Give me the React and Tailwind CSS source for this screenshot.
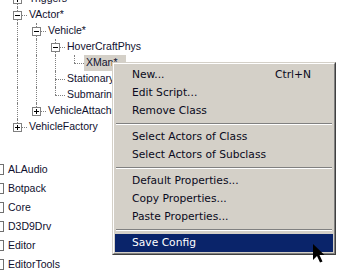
import React from 'react';

const tree = [
  { label: 'Triggers', guides: [], last: false, box: '+', topLine: true },
  { label: 'VActor*', guides: [], last: false, box: '-' },
  { label: 'Vehicle*', guides: [true], last: false, box: '-' },
  { label: 'HoverCraftPhys', guides: [true, true], last: false, box: '-' },
  { label: 'XMan*', guides: [true, true, true], last: true, selected: true },
  { label: 'StationaryTurret', guides: [true, true], last: false },
  { label: 'Submarine', guides: [true, true], last: true },
  { label: 'VehicleAttachment', guides: [true], last: true, box: '+' },
  { label: 'VehicleFactory', guides: [], last: true, box: '+' },
];

const packages = ['ALAudio', 'Botpack', 'Core', 'D3D9Drv', 'Editor', 'EditorTools'];

const menu = [
  { label: 'New...', key: 'Ctrl+N' },
  { label: 'Edit Script...' },
  { label: 'Remove Class' },
  { sep: true },
  { label: 'Select Actors of Class' },
  { label: 'Select Actors of Subclass' },
  { sep: true },
  { label: 'Default Properties...' },
  { label: 'Copy Properties...' },
  { label: 'Paste Properties...' },
  { sep: true },
  { label: 'Save Config', active: true },
];

const ExpandBox = ({ sign }) => (
  <svg width="9" height="9" className="absolute left-[5px] top-[4px]" shapeRendering="crispEdges">
    <rect x="0.5" y="0.5" width="8" height="8" fill="#fff" stroke="#808080" />
    <path d="M2 4.5h5" stroke="#000" />
    {sign === '+' && <path d="M4.5 2v5" stroke="#000" />}
  </svg>
);

const TreeRow = ({ node }) => (
  <div className="flex h-4 items-center pl-[8px]">
    {node.guides.map((g, i) => (
      <div key={i} className="relative h-4 w-[19px] shrink-0">
        {g && <div className="absolute left-[9px] top-0 bottom-0 border-l border-dotted border-[#808080]" />}
      </div>
    ))}
    <div className="relative h-4 w-[19px] shrink-0">
      <div className="absolute left-[9px] top-0 h-2 border-l border-dotted border-[#808080]" />
      {!node.last && <div className="absolute left-[9px] top-2 bottom-0 border-l border-dotted border-[#808080]" />}
      <div className="absolute left-[9px] right-0 top-2 border-t border-dotted border-[#808080]" />
      {node.box && <ExpandBox sign={node.box} />}
    </div>
    <div
      className={`flex h-4 items-center px-[2px] whitespace-nowrap ${node.selected ? 'w-[42px] bg-[#d4d0c8]' : ''}`}
    >
      {node.label}
    </div>
  </div>
);

export default function App() {
  return (
    <div
      className="relative h-[272px] w-[356px] overflow-hidden bg-white text-[10.5px] text-[#10102e]"
      style={{ fontFamily: '"Liberation Sans", Arial, sans-serif' }}
    >
      <div className="flex h-full flex-col">
        {/* class tree */}
        <div className="h-[160px] shrink-0 overflow-hidden">
          <div className="-mt-[9px]">
            {tree.map((n) => (
              <TreeRow key={n.label} node={n} />
            ))}
          </div>
        </div>

        {/* splitter */}
        <div className="h-px bg-[#c0c0c0]" />
        <div className="h-px bg-[#808080]" />
        <div className="h-[2px] bg-[#696969]" />

        {/* package list */}
        <div className="flex-1">
          {packages.map((p) => (
            <div key={p} className="flex h-[19px] items-center">
              <div className="-ml-[7px] h-[11px] w-[11px] shrink-0 border border-[#707070] bg-white" />
              <span className="ml-[4px]">{p}</span>
            </div>
          ))}
        </div>
      </div>

      {/* context menu */}
      <div
        className="absolute left-[112px] top-[62px] h-[193px] w-[224px] border border-t-[#d4d0c8] border-l-[#d4d0c8] border-r-[#404040] border-b-[#404040] bg-[#d4d0c8] text-[10.7px] text-[#0a0a20]"
        style={{ fontFamily: '"DejaVu Sans", Verdana, sans-serif' }}
      >
        <div className="flex h-full flex-col border border-t-white border-l-white border-r-[#808080] border-b-[#808080] px-px pt-[2px] pb-px">
          {menu.map((m, i) =>
            m.sep ? (
              <div key={i} className="mx-px flex h-[8px] shrink-0 flex-col justify-center">
                <div className="h-px bg-[#808080]" />
                <div className="h-px bg-white" />
              </div>
            ) : (
              <div
                key={i}
                className={`flex h-[18px] shrink-0 items-center justify-between pl-[17px] pr-[22px] whitespace-nowrap ${
                  m.active ? 'bg-[#0a246a] text-white' : ''
                }`}
              >
                <span>{m.label}</span>
                {m.key && <span>{m.key}</span>}
              </div>
            )
          )}
        </div>
      </div>

      {/* mouse pointer */}
      <svg width="12" height="19" className="absolute left-[313px] top-[244px]">
        <path d="M0 0 L0 16 L4 12 L7 18.5 L9.5 17.5 L6.5 11 L11.5 11 Z" fill="#000" />
      </svg>
    </div>
  );
}
